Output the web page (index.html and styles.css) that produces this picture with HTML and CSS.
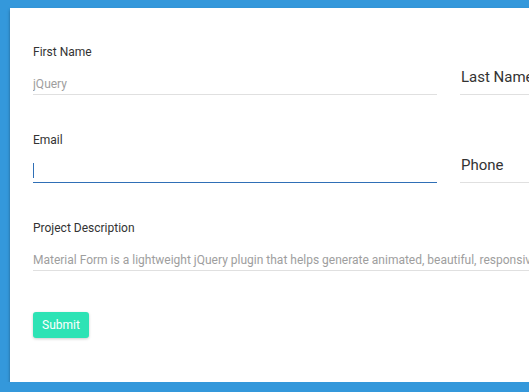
FILE: index.html
```html
<!DOCTYPE html>
<html lang="en">
<head>
  <meta charset="UTF-8">
  <meta name="viewport" content="width=device-width, initial-scale=1.0">
  <title>Material Form</title>
  <link rel="stylesheet" href="styles.css">
</head>
<body>
  <main class="card">
    <form class="form">
      <div class="row">
        <div class="field">
          <label class="label" for="first">First Name</label>
          <input type="text" id="first" class="input-field" placeholder="jQuery">
        </div>
        <div class="field field-float">
          <label class="float-label" for="last">Last Name</label>
          <input type="text" id="last" class="input-field">
        </div>
      </div>

      <div class="row">
        <div class="field">
          <label class="label" for="email">Email</label>
          <input type="email" id="email" class="input-field input-active">
          <span class="caret"></span>
        </div>
        <div class="field field-float">
          <label class="float-label" for="phone">Phone</label>
          <input type="text" id="phone" class="input-field">
        </div>
      </div>

      <div class="field field-wide">
        <label class="label" for="desc">Project Description</label>
        <input type="text" id="desc" class="input-field" placeholder="Material Form is a lightweight jQuery plugin that helps generate animated, beautiful, responsive forms.">
      </div>

      <button type="button" class="submit-button">Submit</button>
    </form>
  </main>
</body>
</html>
```

FILE: styles.css
```css
:root {
  --page-color: #3498db;
  --line-color: #e0e0e0;
  --active-color: #2f6fb6;
  --text-color: #333333;
  --hint-color: #9e9e9e;
  --button-color: #2de3b5;
}

* {
  box-sizing: border-box;
}

body {
  margin: 0;
  padding: 0;
  overflow: hidden;
  font-family: Roboto, "Liberation Sans", Arial, sans-serif;
  background: var(--page-color);
  color: var(--text-color);
}

.card {
  width: 900px;
  height: 374px;
  margin: 8px 0 0 10px;
  padding: 36px 23px 0;
  background: #ffffff;
  box-shadow: 0 2px 3px rgba(0, 0, 0, 0.35);
}

.form {
  display: flex;
  flex-direction: column;
  gap: 37px;
  align-items: flex-start;
}

.row {
  display: flex;
  gap: 23px;
}

.field {
  position: relative;
  display: flex;
  flex-direction: column;
  gap: 10px;
  width: 404px;
}

.field-wide {
  width: 831px;
}

.label {
  font-size: 12px;
  line-height: 16px;
  color: var(--text-color);
}

.float-label {
  position: absolute;
  top: 24px;
  left: 1px;
  font-size: 15px;
  line-height: 18px;
  color: var(--text-color);
}

.field-float::before {
  content: "";
  height: 16px;
}

.input-field {
  display: block;
  width: 100%;
  height: 25px;
  padding: 4px 0 0;
  border: none;
  border-bottom: 1px solid var(--line-color);
  outline: none;
  font-family: inherit;
  font-size: 12px;
  line-height: 20px;
  color: var(--text-color);
  background: transparent;
}

.input-field::placeholder {
  color: var(--hint-color);
}

.input-active {
  border-bottom-color: var(--active-color);
}

.caret {
  position: absolute;
  left: 0;
  top: 31px;
  width: 1px;
  height: 15px;
  background: var(--active-color);
}

.submit-button {
  margin-top: 4px;
  width: 56px;
  height: 26px;
  padding: 0;
  border: none;
  border-radius: 3px;
  background: var(--button-color);
  color: #ffffff;
  font-family: inherit;
  font-size: 12px;
  box-shadow: 0 1px 3px rgba(0, 0, 0, 0.2);
  cursor: pointer;
}
```
